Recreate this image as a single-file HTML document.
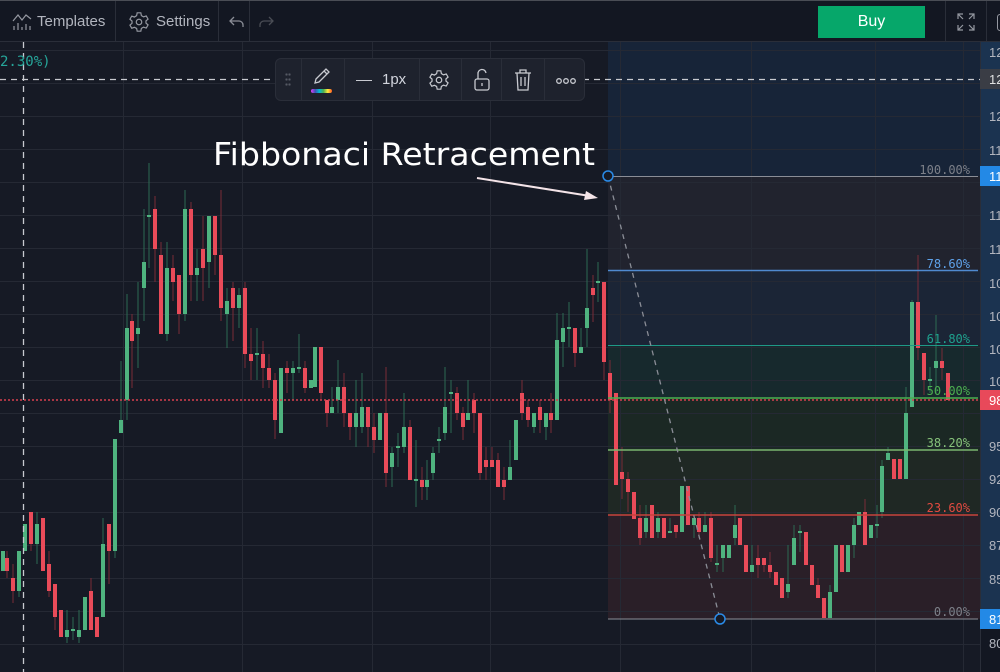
<!DOCTYPE html>
<html><head><meta charset="utf-8">
<style>
html,body{margin:0;padding:0;width:1000px;height:672px;overflow:hidden;background:#161a25;font-family:"Liberation Sans",sans-serif;}
.hdr{position:absolute;left:0;top:0;width:1000px;height:42px;background:#131722;border-top:1px solid #4a4d55;box-sizing:border-box;border-bottom:1px solid #2a2e39;color:#b2b5be;font-size:15px;}
.sep{position:absolute;top:0;width:1px;height:41px;background:#2a2e39;}
.buy{position:absolute;left:818px;top:5px;width:107px;height:32px;background:#06a76a;color:#fff;font-size:16px;text-align:center;line-height:32px;}
svg{position:absolute;left:0;top:0;}
.tb{position:absolute;left:275px;top:58px;width:310px;height:43px;background:#1e222d;border:1px solid #2a2e39;border-radius:6px;box-sizing:border-box;}
.tb .s{position:absolute;top:0;width:1px;height:41px;background:#2a2e39;}
</style></head><body>
<svg width="1000" height="672" id="c" xmlns="http://www.w3.org/2000/svg">
<rect x="0" y="42" width="1000" height="630" fill="#161a25"/>
<rect x="608" y="42" width="372" height="134" fill="#172438"/>
<rect x="608" y="176" width="372" height="94" fill="#21232e"/>
<rect x="608" y="270" width="372" height="75" fill="#1b2536"/>
<rect x="608" y="345" width="372" height="53" fill="#17292d"/>
<rect x="608" y="398" width="372" height="52" fill="#1b2824"/>
<rect x="608" y="450" width="372" height="65" fill="#1f2824"/>
<rect x="608" y="515" width="372" height="104" fill="#2a1f28"/>
<g id="grid" stroke="#252934" stroke-width="1"></g>
<g id="candles"></g>
<line x1="23.5" y1="42" x2="23.5" y2="672" stroke="#c8cad0" stroke-width="1.3" stroke-dasharray="6,5"/>
<line x1="0" y1="79.5" x2="980" y2="79.5" stroke="#c8cad0" stroke-width="1.3" stroke-dasharray="6,5"/>
<line x1="0" y1="400" x2="980" y2="400" stroke="#d5404f" stroke-width="1.5" stroke-dasharray="2,2"/>
<line x1="608" y1="176.5" x2="978" y2="176.5" stroke="#8a8d96"/>
<line x1="608" y1="270.5" x2="978" y2="270.5" stroke="#4f8ad0" stroke-width="1.5"/>
<line x1="608" y1="345.5" x2="978" y2="345.5" stroke="#1f9987"/>
<line x1="608" y1="398" x2="978" y2="398" stroke="#4caf50" stroke-width="1.5"/>
<line x1="608" y1="450" x2="978" y2="450" stroke="#7ab56e" stroke-width="1.5"/>
<line x1="608" y1="515" x2="978" y2="515" stroke="#c7433c" stroke-width="1.5"/>
<line x1="608" y1="619" x2="978" y2="619" stroke="#8a8d96"/>
<g font-family="DejaVu Sans Mono,monospace" font-size="12" text-anchor="end">
<text x="970" y="174" fill="#7d8089">100.00%</text>
<text x="970" y="268" fill="#5ea2ea">78.60%</text>
<text x="970" y="343" fill="#1fa18e">61.80%</text>
<text x="970" y="395" fill="#4caf50">50.00%</text>
<text x="970" y="447" fill="#86c27a">38.20%</text>
<text x="970" y="512" fill="#e24a40">23.60%</text>
<text x="970" y="616" fill="#7d8089">0.00%</text>
</g>
<line x1="608" y1="176" x2="720" y2="619" stroke="#8a8d96" stroke-width="1.3" stroke-dasharray="5,5"/>
<circle cx="608" cy="176" r="5" fill="#161a25" stroke="#2a8be8" stroke-width="1.5"/>
<circle cx="720" cy="619" r="5" fill="#161a25" stroke="#2a8be8" stroke-width="1.5"/>
<text x="213" y="165" fill="#ffffff" font-size="31" font-family="DejaVu Sans,sans-serif" textLength="382" lengthAdjust="spacingAndGlyphs">Fibbonaci Retracement</text>
<line x1="477" y1="178" x2="590" y2="196" stroke="#f4e4e8" stroke-width="2"/>
<polygon points="598,198 586,191 584,200" fill="#f4e4e8"/>
<text x="0" y="66" fill="#26a69a" font-size="14" font-family="DejaVu Sans Mono,monospace">2.30%)</text>
<rect x="980" y="42" width="20" height="630" fill="#131722"/>
<rect x="980" y="42" width="20" height="577" fill="#1b3350"/>
<line x1="980.5" y1="42" x2="980.5" y2="672" stroke="#2a2e39"/>
<rect x="980" y="69" width="20" height="20" fill="#3a3d45"/>
<rect x="980" y="166" width="20" height="20" fill="#2389e6"/>
<rect x="980" y="390" width="20" height="20" fill="#e8495a"/>
<rect x="980" y="609" width="20" height="20" fill="#2389e6"/>
<g font-size="13" fill="#b2b5be" font-family="Liberation Sans,sans-serif">
<text x="989" y="57">12</text><text x="989" y="84" fill="#e0e0e0">12</text><text x="989" y="121">12</text>
<text x="989" y="155">11</text><text x="989" y="181" fill="#fff">11</text><text x="989" y="220">11</text>
<text x="989" y="254">11</text><text x="989" y="288">10</text><text x="989" y="321">10</text>
<text x="989" y="354">10</text><text x="989" y="386">10</text><text x="989" y="405" fill="#fff">98</text>
<text x="989" y="451">95</text><text x="989" y="484">92</text><text x="989" y="517">90</text>
<text x="989" y="550">87</text><text x="989" y="584">85</text><text x="989" y="624" fill="#fff">81</text>
<text x="989" y="648">80</text>
</g>
</svg>

<div class="hdr">
 <svg width="22" height="20" style="left:12px;top:10px" viewBox="0 0 22 20" fill="none" stroke="#9598a1" stroke-width="1.2"><path d="M1 10 L6 4 L10 9 L14 4 L19 8"/><path d="M2 19v-4M6 19v-7M10 19v-3M14 19v-6M18 19v-4"/></svg>
 <span style="position:absolute;left:37px;top:12px">Templates</span>
 <div class="sep" style="left:115px"></div>
 <svg width="22" height="22" style="left:128px;top:10px" viewBox="0 0 24 24" fill="none" stroke="#9598a1" stroke-width="1.3"><circle cx="12" cy="12" r="3"/><path d="M10 2h4l.6 3 2.4 1.4 2.9-1 2 3.4-2.3 2v2.4l2.3 2-2 3.4-2.9-1-2.4 1.4-.6 3h-4l-.6-3L7 17.8l-2.9 1-2-3.4 2.3-2v-2.4l-2.3-2 2-3.4 2.9 1L9.4 5z"/></svg>
 <span style="position:absolute;left:156px;top:12px">Settings</span>
 <div class="sep" style="left:218px"></div>
 <svg width="16" height="14" style="left:229px;top:14px" viewBox="0 0 16 14" fill="none" stroke="#8a8d96" stroke-width="1.3"><path d="M5 2L1 6l4 4M1 6h9a4 4 0 0 1 4 4v2"/></svg>
 <svg width="16" height="14" style="left:258px;top:14px" viewBox="0 0 16 14" fill="none" stroke="#4a4d55" stroke-width="1.3"><path d="M11 2l4 4-4 4M15 6H6a4 4 0 0 0-4 4v2"/></svg>
 <div class="sep" style="left:249px;"></div>
 <div class="buy">Buy</div>
 <div class="sep" style="left:945px"></div>
 <svg width="20" height="20" style="left:956px;top:11px" viewBox="0 0 20 20" fill="none" stroke="#9598a1" stroke-width="1.2"><path d="M2 7V2h5M2 2l5 5M13 2h5v5M18 2l-5 5M2 13v5h5M2 18l5-5M18 13v5h-5M18 18l-5-5"/></svg>
 <div class="sep" style="left:986px"></div>
 <div style="position:absolute;left:997px;top:13px;width:8px;height:15px;border:1.3px solid #9598a1;border-radius:3px"></div>
</div>

<div class="tb">
 <div style="position:absolute;left:9px;top:13px;width:6px;height:16px;background:radial-gradient(circle,#555964 1px,transparent 1.3px) 0 0/3px 5px"></div>
 <div class="s" style="left:25px"></div>
 <svg width="20" height="20" style="left:36px;top:7px" viewBox="0 0 20 20" fill="none" stroke="#c8cad0" stroke-width="1.3"><path d="M3 17l1-4L14 3l3 3L7 16z M12 5l3 3"/></svg>
 <div style="position:absolute;left:35px;top:30px;width:21px;height:4px;border-radius:2px;background:linear-gradient(90deg,#e040fb,#3f51b5,#00bcd4,#4caf50,#ffeb3b,#ff5722)"></div>
 <div class="s" style="left:68px"></div>
 <div style="position:absolute;left:80px;top:21px;width:16px;height:1.4px;background:#c8cad0"></div>
 <span style="position:absolute;left:106px;top:12px;color:#d1d4dc;font-size:15px">1px</span>
 <div class="s" style="left:143px"></div>
 <svg width="22" height="22" style="left:152px;top:10px" viewBox="0 0 24 24" fill="none" stroke="#c8cad0" stroke-width="1.3"><circle cx="12" cy="12" r="3"/><path d="M10 2h4l.6 3 2.4 1.4 2.9-1 2 3.4-2.3 2v2.4l2.3 2-2 3.4-2.9-1-2.4 1.4-.6 3h-4l-.6-3L7 17.8l-2.9 1-2-3.4 2.3-2v-2.4l-2.3-2 2-3.4 2.9 1L9.4 5z"/></svg>
 <div class="s" style="left:185px"></div>
 <svg width="20" height="24" style="left:196px;top:9px" viewBox="0 0 20 24" fill="none" stroke="#c8cad0" stroke-width="1.3"><rect x="3" y="11" width="14" height="11" rx="2"/><path d="M6 11V6a4 4 0 0 1 8-1"/><path d="M10 15v3"/></svg>
 <div class="s" style="left:225px"></div>
 <svg width="20" height="24" style="left:237px;top:9px" viewBox="0 0 20 24" fill="none" stroke="#c8cad0" stroke-width="1.3"><path d="M2 5h16M7 5V2h6v3M4 5l1 17h10l1-17M8 9v9M12 9v9"/></svg>
 <div class="s" style="left:268px"></div>
 <svg width="22" height="8" style="left:279px;top:18px" viewBox="0 0 22 8" fill="none" stroke="#c8cad0" stroke-width="1.3"><circle cx="4" cy="4" r="2.3"/><circle cx="11" cy="4" r="2.3"/><circle cx="18" cy="4" r="2.3"/></svg>
</div>

<script>
var G=[[1,551,571,551,571,'g'],[5,558,571,551,578,'r'],[11,578,591,564,603,'r'],[17,551,591,551,597,'g'],[23,524,551,524,551,'g'],[29,512,544,512,551,'r'],[35,524,544,512,564,'g'],[41,518,571,518,571,'r'],[47,564,591,551,597,'r'],[53,584,617,584,630,'r'],[59,610,637,610,637,'r'],[65,630,637,610,643,'g'],[71,629,631,617,640,'g'],[77,630,637,610,643,'g'],[83,597,630,597,630,'g'],[89,591,630,578,630,'r'],[95,617,637,617,637,'r'],[101,544,617,518,617,'g'],[107,524,551,524,584,'r'],[113,439,551,439,558,'g'],[119,420,433,361,433,'g'],[125,328,400,294,420,'g'],[130,321,341,314,388,'r'],[136,328,334,282,368,'g'],[142,262,288,209,321,'g'],[147,215,217,163,268,'g'],[153,209,249,196,282,'r'],[159,255,334,242,334,'r'],[165,268,334,242,341,'g'],[171,268,282,255,301,'r'],[177,275,314,275,334,'r'],[183,209,314,190,321,'g'],[189,209,275,202,301,'r'],[195,268,275,249,301,'g'],[201,249,268,216,301,'r'],[207,216,262,216,288,'g'],[213,216,255,216,275,'r'],[219,255,308,190,321,'r'],[225,301,314,288,348,'g'],[231,288,308,282,341,'r'],[237,295,308,288,328,'g'],[243,288,354,282,368,'r'],[249,354,361,328,380,'r'],[255,353,355,328,380,'g'],[261,354,368,341,388,'r'],[267,368,380,354,388,'r'],[273,380,420,373,439,'r'],[279,368,433,368,433,'g'],[285,368,373,361,393,'r'],[291,368,373,361,400,'g'],[297,367,369,334,373,'g'],[303,368,388,361,393,'r'],[309,380,388,380,388,'g'],
[313,347,387,347,387,'g'],[319,347,393,347,400,'r'],[325,400,413,400,427,'r'],[330,407,413,387,413,'g'],[336,387,400,360,413,'g'],[342,387,413,373,427,'r'],[348,413,427,413,440,'r'],[354,413,427,380,447,'g'],[360,407,427,373,433,'g'],[366,407,427,407,447,'r'],[372,427,440,413,453,'r'],[378,413,440,413,440,'g'],[384,413,473,367,487,'r'],[390,453,467,447,487,'g'],[396,446,448,433,467,'g'],[402,427,447,393,453,'g'],[408,427,480,420,480,'r'],[414,479,481,440,507,'g'],[420,480,487,467,500,'r'],[425,480,487,460,500,'g'],[431,453,473,447,480,'g'],[437,439,441,427,453,'g'],[443,407,433,367,440,'g'],[449,392,394,380,433,'g'],[455,393,413,387,420,'r'],[461,413,427,407,440,'r'],[466,413,420,380,420,'g'],[472,400,413,393,433,'r'],[478,413,473,413,480,'r'],[484,460,467,447,480,'r'],[490,460,467,447,467,'r'],[496,460,487,453,487,'r'],[502,480,487,467,500,'r'],[508,467,480,440,480,'g'],[514,420,460,420,460,'g'],[520,393,413,380,420,'r'],[526,407,420,400,427,'r'],[532,413,427,413,433,'g'],[538,407,420,400,433,'r'],[544,413,427,413,440,'g'],[549,413,420,393,433,'r'],[555,340,420,313,420,'g'],[561,328,342,313,367,'g'],[567,327,329,302,347,'g'],[573,328,353,328,367,'r'],[579,347,353,328,353,'g'],[585,308,328,249,347,'g'],[591,288,295,275,322,'r'],[596,281,283,262,302,'g'],[602,282,362,282,380,'r'],
[608,373,400,360,413,'r'],[614,393,485,393,485,'r'],[620,472,479,447,499,'r'],[626,479,492,472,512,'r'],[632,492,519,492,519,'r'],[638,518,538,505,545,'r'],[644,518,532,505,538,'g'],[650,505,538,505,538,'r'],[656,518,532,512,538,'g'],[662,518,538,518,538,'r'],[668,531,533,518,532,'g'],[674,525,532,525,538,'r'],[680,486,532,486,532,'g'],[686,486,525,486,525,'r'],[692,518,525,518,538,'g'],[697,518,532,512,538,'r'],[703,525,532,512,532,'g'],[709,518,558,512,562,'r'],[715,563,565,545,572,'g'],[721,545,558,545,572,'g'],[727,545,558,545,558,'g'],[733,525,538,505,545,'g'],[738,518,545,518,545,'r'],[744,545,572,545,572,'r'],[750,565,572,545,572,'g'],[756,558,565,545,578,'r'],[762,558,565,558,572,'r'],[768,565,572,552,578,'r'],[774,572,585,572,585,'r'],[780,578,598,578,598,'r'],[786,584,592,545,598,'g'],[792,538,565,525,565,'g'],[798,531,533,525,552,'g'],[804,532,565,532,565,'r'],[810,565,585,565,585,'r'],[816,585,598,578,598,'r'],[822,598,618,598,618,'r'],[828,592,618,585,618,'g'],[834,545,592,545,592,'g'],[840,545,572,545,572,'r'],[846,545,572,545,572,'g'],[852,525,545,518,558,'g'],[857,512,525,512,525,'g'],[863,512,545,499,545,'r'],[869,525,538,525,538,'g'],[875,524,526,505,538,'g'],[880,466,512,460,518,'g'],[886,453,460,447,460,'g'],[892,459,479,459,479,'r'],[898,459,479,459,479,'r'],[904,413,479,387,479,'g'],[910,302,407,300,407,'g'],[916,302,348,255,360,'r'],[922,353,380,353,395,'r'],[928,379,381,367,393,'g'],[934,361,368,315,393,'g'],[940,361,368,348,380,'r'],[946,373,400,373,400,'r']];
var h='';
G.forEach(function(c){var col=c[5]=='g'?'#4fb37f':'#e94b59';var wc=c[5]=='g'?'#2c6a52':'#7a2c38';
h+='<rect x="'+(c[0]+1.5)+'" y="'+c[3]+'" width="1" height="'+(c[4]-c[3])+'" fill="'+wc+'"/>';
var bh=Math.max(c[2]-c[1],1.5);h+='<rect x="'+c[0]+'" y="'+c[1]+'" width="4" height="'+bh+'" fill="'+col+'"/>';});
document.getElementById('candles').innerHTML=h;
var g='';[123,242,372,490,620,751,875,963].forEach(function(x){g+='<line x1="'+(x+.5)+'" y1="42" x2="'+(x+.5)+'" y2="672"/>';});
for(var y=50;y<672;y+=33){g+='<line x1="0" y1="'+(y+.5)+'" x2="980" y2="'+(y+.5)+'"/>';}
document.getElementById('grid').innerHTML=g;
</script>
</body></html>
